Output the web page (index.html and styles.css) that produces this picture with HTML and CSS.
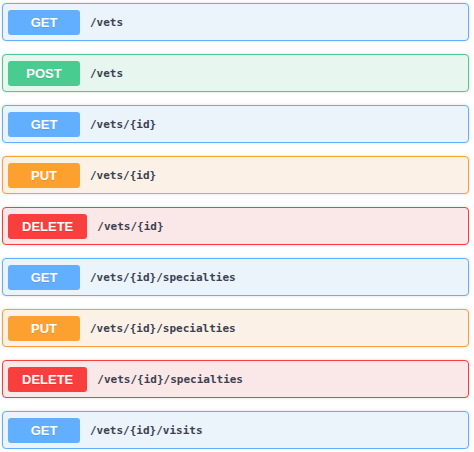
FILE: index.html
```html
<!DOCTYPE html>
<html>
<head>
<meta charset="utf-8">
<link rel="stylesheet" href="styles.css">
</head>
<body>
<div class="ops">
  <div class="op get"><span class="method">GET</span><span class="path">/vets</span></div>
  <div class="op post"><span class="method">POST</span><span class="path">/vets</span></div>
  <div class="op get"><span class="method">GET</span><span class="path">/vets/{id}</span></div>
  <div class="op put"><span class="method">PUT</span><span class="path">/vets/{id}</span></div>
  <div class="op delete"><span class="method">DELETE</span><span class="path">/vets/{id}</span></div>
  <div class="op get"><span class="method">GET</span><span class="path">/vets/{id}/specialties</span></div>
  <div class="op put"><span class="method">PUT</span><span class="path">/vets/{id}/specialties</span></div>
  <div class="op delete"><span class="method">DELETE</span><span class="path">/vets/{id}/specialties</span></div>
  <div class="op get"><span class="method">GET</span><span class="path">/vets/{id}/visits</span></div>
</div>
</body>
</html>
```
FILE: styles.css
```css
html, body {
  margin: 0;
  padding: 0;
  background: #ffffff;
}
.ops {
  display: flex;
  flex-direction: column;
  gap: 13px;
  padding: 3px 5px 0 2px;
}
.op {
  display: flex;
  align-items: center;
  height: 38px;
  box-sizing: border-box;
  padding: 0 5px;
  border: 1px solid;
  border-radius: 4px;
  box-shadow: 0 0 3px rgba(0, 0, 0, 0.15);
}
.method {
  box-sizing: border-box;
  min-width: 72px;
  height: 25px;
  padding: 0 14px;
  border-radius: 3px;
  display: flex;
  align-items: center;
  justify-content: center;
  color: #fff;
  font-family: "Liberation Sans", Arial, sans-serif;
  font-weight: bold;
  font-size: 13px;
  text-shadow: 0 1px 0 rgba(0, 0, 0, 0.1);
}
.path {
  margin-left: 10px;
  font-family: "DejaVu Sans Mono", monospace;
  font-weight: bold;
  font-size: 11px;
  color: #3b4151;
}
.get { background: #ebf3fb; border-color: #61affe; }
.get .method { background: #61affe; }
.post { background: #e8f6f0; border-color: #49cc90; }
.post .method { background: #49cc90; }
.put { background: #fbf1e6; border-color: #fca130; }
.put .method { background: #fca130; }
.delete { background: #fae7e7; border-color: #f93e3e; }
.delete .method { background: #f93e3e; }
```
